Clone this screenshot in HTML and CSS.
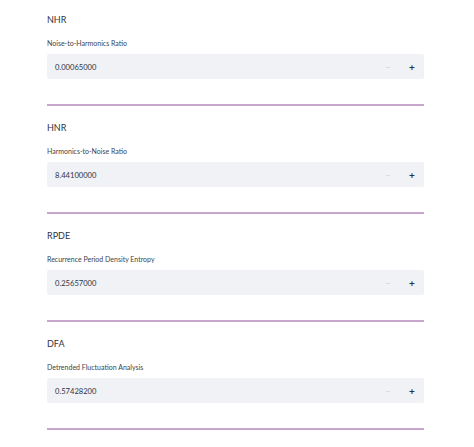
FILE: index.html
```html
<!DOCTYPE html>
<html lang="en">

<head>
    <meta charset="UTF-8">
    <meta name="viewport" content="width=device-width, initial-scale=1.0">
    <title>Voice Features</title>
    <link rel="stylesheet" href="styles.css">
</head>

<body>

    <div class="main">

        <!-- NHR -->
        <div class="feature">
            <div class="feature-title">NHR</div>
            <div class="feature-label">Noise-to-Harmonics Ratio</div>
            <div class="number-input">
                <span class="value">0.00065000</span>
                <span class="step minus">&minus;</span>
                <span class="step plus">+</span>
            </div>
            <div class="divider"></div>
        </div>

        <!-- HNR -->
        <div class="feature">
            <div class="feature-title">HNR</div>
            <div class="feature-label">Harmonics-to-Noise Ratio</div>
            <div class="number-input">
                <span class="value">8.44100000</span>
                <span class="step minus">&minus;</span>
                <span class="step plus">+</span>
            </div>
            <div class="divider"></div>
        </div>

        <!-- RPDE -->
        <div class="feature">
            <div class="feature-title">RPDE</div>
            <div class="feature-label">Recurrence Period Density Entropy</div>
            <div class="number-input">
                <span class="value">0.25657000</span>
                <span class="step minus">&minus;</span>
                <span class="step plus">+</span>
            </div>
            <div class="divider"></div>
        </div>

        <!-- DFA -->
        <div class="feature">
            <div class="feature-title">DFA</div>
            <div class="feature-label">Detrended Fluctuation Analysis</div>
            <div class="number-input">
                <span class="value">0.57428200</span>
                <span class="step minus">&minus;</span>
                <span class="step plus">+</span>
            </div>
            <div class="divider"></div>
        </div>

    </div>

</body>

</html>
```

FILE: styles.css
```css
body {
    font-family: Lato, "Open Sans", sans-serif;
    background: #ffffff;
    color: #31333f;
    margin: 0;
}

.main {
    width: 377px;
    padding: 14px 0 0 47px;
}

.feature {
    margin-bottom: 16px;
}

.feature-title {
    font-size: 9px;
    line-height: 12px;
    margin-bottom: 12px;
}

.feature-label {
    font-size: 7px;
    line-height: 10px;
    margin-bottom: 6px;
    color: #3d3f4a;
}

/* Number input box */
.number-input {
    display: flex;
    align-items: center;
    height: 25px;
    background-color: #f0f2f6;
    border-radius: 2px;
}

.value {
    flex: 1;
    padding-left: 8px;
    font-size: 7.6px;
}

.step {
    width: 24px;
    text-align: center;
    font-size: 10px;
    font-weight: bold;
}

.minus {
    color: #d4d6dc;
    font-weight: normal;
}

.plus {
    color: #31333f;
}

.divider {
    margin-top: 25px;
    height: 2px;
    background-color: #c9a6ce;
}
```
